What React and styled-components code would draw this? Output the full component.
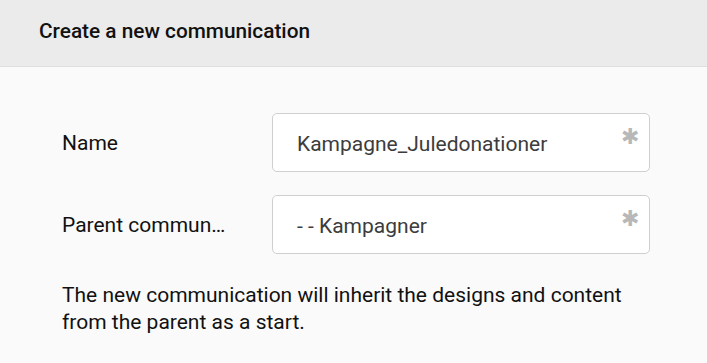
import React from "react";
import styled, { createGlobalStyle } from "styled-components";

const Global = createGlobalStyle`
  html, body { margin: 0; padding: 0; background: #fafafa; }
  body { font-family: Roboto, "Liberation Sans", sans-serif; }
`;

const Dialog = styled.div`
  width: 707px;
  height: 363px;
  background: #fafafa;
  overflow: hidden;
`;

const Header = styled.div`
  height: 67px;
  box-sizing: border-box;
  background: #ebebeb;
  border-bottom: 1px solid #dedede;
  display: flex;
  align-items: center;
  padding: 0 0 5px 39px;
`;

const Title = styled.h1`
  margin: 0;
  font-size: 20.8px;
  font-weight: 500;
  color: #111;
`;

const Body = styled.div`
  padding: 46px 40px 0 62px;
  display: flex;
  flex-direction: column;
  gap: 23px;
`;

const Row = styled.div`
  display: flex;
  align-items: center;
`;

const Label = styled.label`
  width: 166px;
  margin-right: 44px;
  font-size: 21px;
  color: #111;
  white-space: nowrap;
  overflow: hidden;
  text-overflow: ellipsis;
`;

const Field = styled.div`
  position: relative;
  width: 378px;
  height: 59px;
  box-sizing: border-box;
  border: 1px solid #cfcfcf;
  border-radius: 5px;
  background: #fff;
  display: flex;
  align-items: center;
  padding: 2px 0 0 24px;
  font-size: 21px;
  color: #3c3c3c;
`;

const Required = styled.span`
  position: absolute;
  right: 10px;
  top: 12px;
  font-size: 22px;
  color: #b8b8b8;
  line-height: 1;
`;

const Note = styled.p`
  margin: 0;
  padding: 28px 40px 0 62px;
  font-size: 21px;
  line-height: 27px;
  color: #111;
`;

export default function App() {
  return (
    <>
      <Global />
      <Dialog>
        <Header>
          <Title>Create a new communication</Title>
        </Header>
        <Body>
          <Row>
            <Label>Name</Label>
            <Field>
              Kampagne_Juledonationer
              <Required>✱</Required>
            </Field>
          </Row>
          <Row>
            <Label>Parent communication</Label>
            <Field>
              - - Kampagner
              <Required>✱</Required>
            </Field>
          </Row>
        </Body>
        <Note>
          The new communication will inherit the designs and content
          <br />
          from the parent as a start.
        </Note>
      </Dialog>
    </>
  );
}
